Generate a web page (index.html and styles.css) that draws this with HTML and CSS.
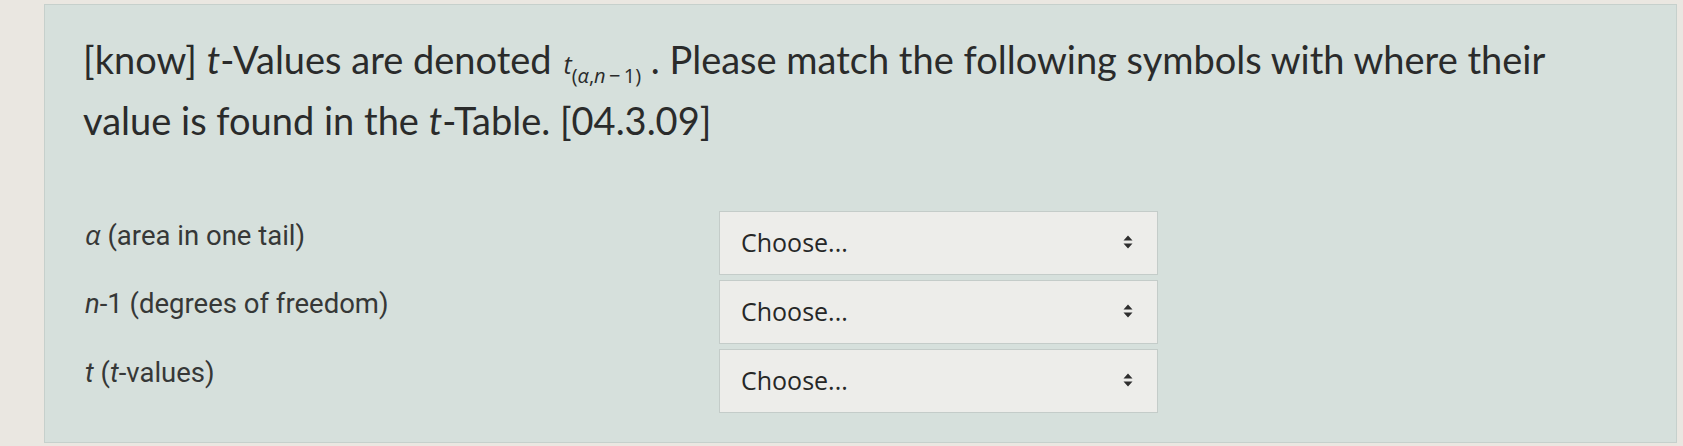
FILE: index.html
```html
<!DOCTYPE html>
<html lang="en">
<head>
<meta charset="utf-8">
<title>t-Values matching</title>
<link rel="stylesheet" href="styles.css">
</head>
<body>
<div class="panel">
  <div class="question">[know] <i>t</i>-Values are denoted <span class="math"><i>t</i><sub>(<i>α</i>,<i>n</i>&#8201;−&#8201;1)</sub></span> . Please match the following symbols with where their value is found in the <i>t</i>-Table. [04.3.09]</div>
  <div class="rows">
    <div class="label"><i class="sym">α</i> (area in one tail)</div>
    <div class="select"><span>Choose...</span><svg class="arrows" width="10" height="14" viewBox="0 0 10 14"><path d="M5 0.5 L9.5 5.5 H0.5 Z M5 13.5 L9.5 8.5 H0.5 Z" fill="#2e2e2e"/></svg></div>
    <div class="label"><i>n</i>-1 (degrees of freedom)</div>
    <div class="select"><span>Choose...</span><svg class="arrows" width="10" height="14" viewBox="0 0 10 14"><path d="M5 0.5 L9.5 5.5 H0.5 Z M5 13.5 L9.5 8.5 H0.5 Z" fill="#2e2e2e"/></svg></div>
    <div class="label"><i>t</i> (<i>t</i>-values)</div>
    <div class="select"><span>Choose...</span><svg class="arrows" width="10" height="14" viewBox="0 0 10 14"><path d="M5 0.5 L9.5 5.5 H0.5 Z M5 13.5 L9.5 8.5 H0.5 Z" fill="#2e2e2e"/></svg></div>
  </div>
</div>
</body>
</html>
```

FILE: styles.css
```css
html, body {
  margin: 0;
  padding: 0;
}
body {
  background: #eae7e1;
  width: 1683px;
  height: 446px;
  overflow: hidden;
  padding: 4px 6px 0 44px;
  box-sizing: border-box;
}
.panel {
  background: #d6e0dc;
  border: 1px solid #c6d0cc;
  height: 439px;
  box-sizing: border-box;
  padding: 24px 90px 0 38px;
}
.question {
  font-family: Lato, "Open Sans", sans-serif;
  font-size: 38px;
  line-height: 61px;
  color: #2a2b2b;
}
.math {
  font-family: "Open Sans", sans-serif;
  font-size: 25px;
  line-height: 1;
  margin-left: 2px;
}
.math sub {
  font-size: 20px;
  vertical-align: -9px;
  line-height: 0;
}
.rows {
  margin-top: 60px;
  display: grid;
  grid-template-columns: 636px 439px;
  grid-auto-rows: 64px;
  row-gap: 5px;
}
.label {
  font-family: Roboto, sans-serif;
  font-size: 27.5px;
  line-height: 30px;
  color: #363837;
  padding-top: 9px;
  padding-left: 2px;
}
.sym {
  font-family: "Open Sans", sans-serif;
}
.select {
  background: #ededea;
  border: 1px solid #c4ccc9;
  box-sizing: border-box;
  display: flex;
  align-items: center;
  justify-content: space-between;
  padding: 0 24px 2px 21px;
  font-family: "Open Sans", sans-serif;
  font-size: 25px;
  color: #262727;
}
.arrows {
  display: block;
}
```
